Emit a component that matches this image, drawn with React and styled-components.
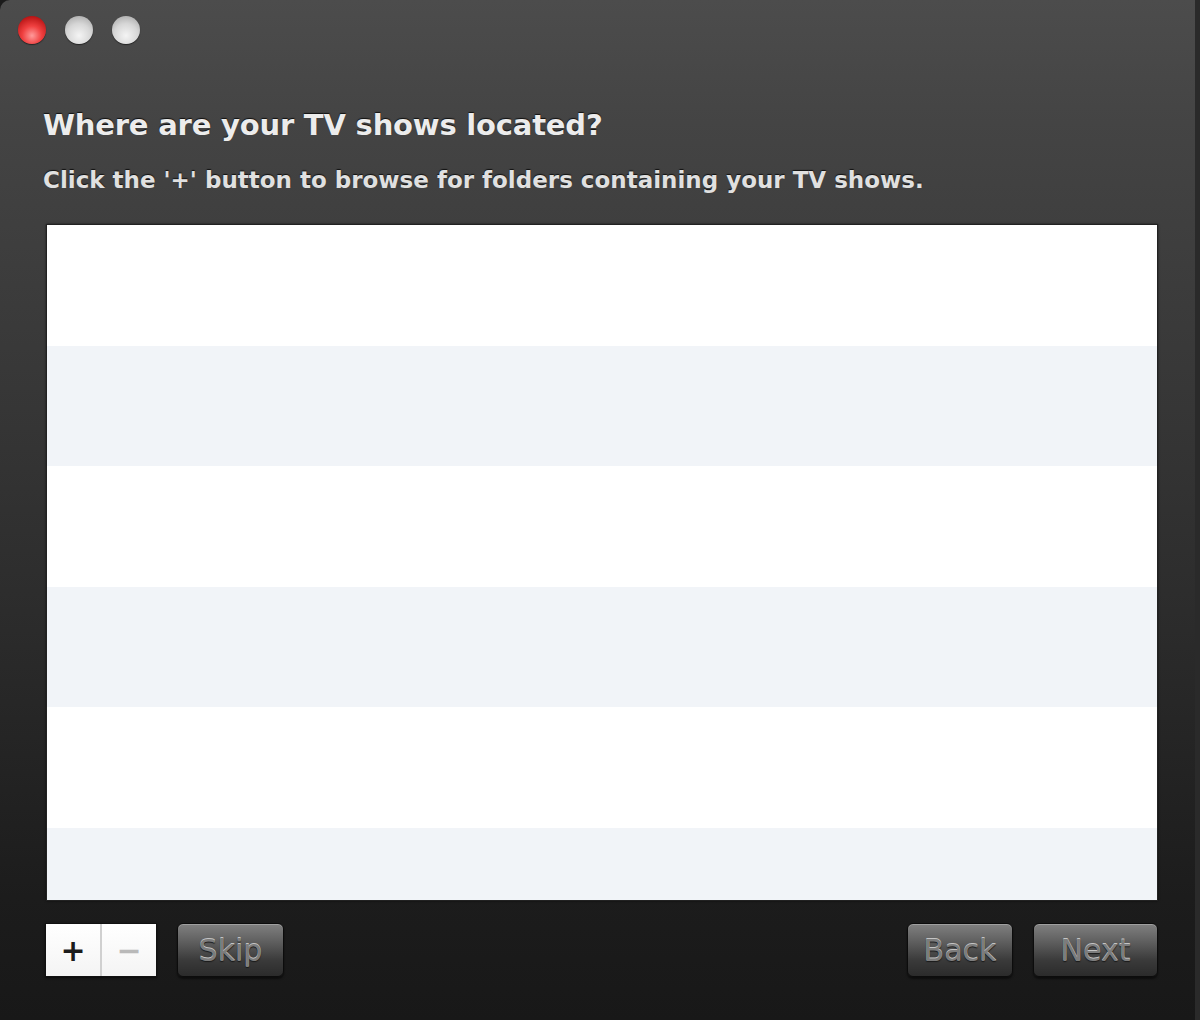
import React from 'react'
import styled, { createGlobalStyle } from 'styled-components'

const Global = createGlobalStyle`
  html, body { margin: 0; padding: 0; background: #1b1b1b; }
  body { font-family: "DejaVu Sans", "Liberation Sans", sans-serif; }
`

const Window = styled.div`
  width: 1200px;
  height: 1020px;
  box-sizing: border-box;
  display: flex;
  flex-direction: column;
  background: linear-gradient(180deg, #4c4c4c 0%, #444 12%, #3b3b3b 30%, #2c2c2c 60%, #1c1c1c 88%, #181818 100%);
  border-right: 5px solid #2a2a2a;
  border-top-left-radius: 10px;
  overflow: hidden;
`

const TitleBar = styled.div`
  height: 60px;
  display: flex;
  align-items: center;
  gap: 19px;
  padding-left: 18px;
`

const Light = styled.span`
  width: 28px;
  height: 28px;
  border-radius: 50%;
  background: ${p => p.red
    ? 'radial-gradient(circle at 50% 70%, #ff9a9a 0%, #f04040 40%, #b81414 80%)'
    : 'radial-gradient(circle at 50% 70%, #f4f4f4 0%, #d6d6d6 50%, #a9a9a9 90%)'};
  box-shadow: 0 1px 1px rgba(0,0,0,0.5);
`

const Content = styled.div`
  flex: 1;
  display: flex;
  flex-direction: column;
  padding: 46px 37px 0 43px;
`

const Title = styled.h1`
  margin: 0;
  font-size: 29px;
  font-weight: bold;
  color: #ececec;
  letter-spacing: -0.2px;
  text-shadow: 0 -1px 1px #111;
  line-height: 38px;
`

const Subtitle = styled.p`
  margin: 21px 0 0;
  font-size: 23px;
  font-weight: bold;
  color: #e0e0e0;
  text-shadow: 0 -1px 1px #111;
  line-height: 30px;
`

const List = styled.div`
  margin: 29px 0 0 3px;
  height: 675px;
  background: #fff;
  border: 1px solid #222;
  box-shadow: 0 0 2px rgba(0,0,0,0.6);
  display: flex;
  flex-direction: column;
  overflow: hidden;
`

const Row = styled.div`
  flex: 0 0 120.5px;
  background: ${p => p.alt ? '#f1f4f8' : '#ffffff'};
`

const Footer = styled.div`
  display: flex;
  align-items: center;
  margin: 21px 0 0 2px;
  height: 56px;
`

const Segmented = styled.div`
  display: flex;
  height: 52px;
  background: linear-gradient(#ffffff, #f4f4f4);
  border: 1px solid #111;
  box-shadow: 0 1px 2px rgba(0,0,0,0.6);
`

const SegButton = styled.div`
  width: 54px;
  display: flex;
  align-items: center;
  justify-content: center;
  font-size: 30px;
  font-weight: bold;
  color: ${p => p.dim ? '#b9b9b9' : '#1c1c1c'};
  border-left: ${p => p.divider ? '2px solid #d0d0d0' : 'none'};
`

const Button = styled.div`
  width: ${p => p.w}px;
  height: 54px;
  box-sizing: border-box;
  border-radius: 6px;
  display: flex;
  align-items: center;
  justify-content: center;
  background: linear-gradient(180deg, #808080 0%, #5e5e5e 35%, #3a3a3a 70%, #2b2b2b 100%);
  border: 1px solid #0c0c0c;
  box-shadow: inset 0 1px 0 rgba(255,255,255,0.25), 0 2px 2px rgba(0,0,0,0.5);
  color: #7c7c7c;
  font-size: 30px;
  text-shadow: 0 -1px 0 #c4c4c4, 0 1px 1px #1a1a1a;
  margin-left: ${p => p.gap || 0}px;
`

const Spacer = styled.div`
  flex: 1;
`

export default function App() {
  const rows = [false, true, false, true, false, true]
  return (
    <>
      <Global />
      <Window>
        <TitleBar>
          <Light red />
          <Light />
          <Light />
        </TitleBar>
        <Content>
          <Title>Where are your TV shows located?</Title>
          <Subtitle>Click the '+' button to browse for folders containing your TV shows.</Subtitle>
          <List>
            {rows.map((alt, i) => <Row key={i} alt={alt} />)}
          </List>
          <Footer>
            <Segmented>
              <SegButton>+</SegButton>
              <SegButton divider dim>−</SegButton>
            </Segmented>
            <Button w={107} gap={20}>Skip</Button>
            <Spacer />
            <Button w={106}>Back</Button>
            <Button w={125} gap={20}>Next</Button>
          </Footer>
        </Content>
      </Window>
    </>
  )
}
